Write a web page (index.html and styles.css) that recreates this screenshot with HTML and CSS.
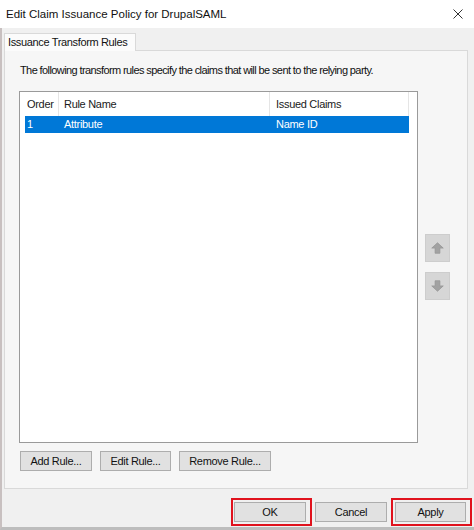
FILE: index.html
```html
<!DOCTYPE html>
<html lang="en">
<head>
<meta charset="utf-8">
<title>Edit Claim Issuance Policy for DrupalSAML</title>
<link rel="stylesheet" href="styles.css">
</head>
<body>
<div class="window">
  <div class="titlebar">
    <span class="title">Edit Claim Issuance Policy for DrupalSAML</span>
    <svg class="close" viewBox="0 0 10 10" aria-hidden="true"><path d="M0.5 0.5 L9.5 9.5 M9.5 0.5 L0.5 9.5" stroke="#333" stroke-width="1" fill="none"/></svg>
  </div>
  <div class="content">
    <div class="tab">Issuance Transform Rules</div>
    <div class="panel">
      <p class="desc">The following transform rules specify the claims that will be sent to the relying party.</p>
      <div class="list-row">
        <div class="listbox">
          <div class="lv-grid lv-header">
            <div class="cell c-order">Order</div>
            <div class="cell c-name">Rule Name</div>
            <div class="cell c-claims">Issued Claims</div>
          </div>
          <div class="lv-grid lv-row selected">
            <div class="cell c-order">1</div>
            <div class="cell c-name">Attribute</div>
            <div class="cell c-claims">Name ID</div>
          </div>
        </div>
        <div class="move-buttons">
          <button class="arrow-btn" aria-label="Move up">
            <svg viewBox="0 0 14 13"><path d="M7 0.8 L13.2 6.6 H9.6 V12.2 H4.4 V6.6 H0.8 Z" fill="#a2a2a2" stroke="#959595" stroke-width="0.8"/></svg>
          </button>
          <button class="arrow-btn" aria-label="Move down">
            <svg viewBox="0 0 14 13"><path d="M7 12.2 L13.2 6.4 H9.6 V0.8 H4.4 V6.4 H0.8 Z" fill="#a2a2a2" stroke="#959595" stroke-width="0.8"/></svg>
          </button>
        </div>
      </div>
      <div class="rule-buttons">
        <button class="btn btn-add">Add Rule...</button>
        <button class="btn btn-edit">Edit Rule...</button>
        <button class="btn btn-remove">Remove Rule...</button>
      </div>
    </div>
    <div class="dialog-buttons">
      <span class="hl hl-ok"><button class="btn btn-ok">OK</button></span>
      <button class="btn btn-cancel">Cancel</button>
      <span class="hl hl-apply"><button class="btn btn-apply">Apply</button></span>
    </div>
  </div>
</div>
</body>
</html>
```
FILE: styles.css
```css
html, body {
  margin: 0;
  padding: 0;
  background: #f0f0f0;
  font-family: "Liberation Sans", Arial, sans-serif;
  color: #000;
}

.window {
  width: 474px;
  height: 530px;
  display: flex;
  flex-direction: column;
  background: #f0f0f0;
  overflow: hidden;
}

.titlebar {
  flex: none;
  height: 28px;
  background: #ffffff;
  display: flex;
  align-items: center;
  justify-content: space-between;
  padding: 0 11px 0 6px;
}

.title {
  font-size: 11.5px;
  color: #111;
}

.close {
  width: 10px;
  height: 10px;
}

.content {
  flex: 1;
  display: flex;
  flex-direction: column;
  align-items: flex-start;
  border-left: 2px solid #c8c0c0;
  border-bottom: 3px solid #bdbdbd;
  padding: 5px 0 0 2px;
}

.tab {
  position: relative;
  z-index: 1;
  width: 132px;
  height: 18px;
  box-sizing: border-box;
  border: 1px solid #d9d9d9;
  border-bottom: none;
  background: #fbfbfb;
  font-size: 11px;
  line-height: 13px;
  letter-spacing: -0.35px;
  padding: 2px 0 0 3px;
  margin-bottom: -1px;
  color: #111;
}

.panel {
  width: 464px;
  height: 439px;
  box-sizing: border-box;
  border: 1px solid #d9d9d9;
  background: #f6f6f6;
  padding: 12px 0 0 14px;
}

.desc {
  margin: 0 0 14px 1px;
  font-size: 11px;
  line-height: 14px;
  letter-spacing: -0.6px;
  color: #111;
}

.list-row {
  display: flex;
  align-items: center;
  gap: 7px;
}

.listbox {
  width: 399px;
  height: 352px;
  box-sizing: border-box;
  border: 1px solid #9a9a9a;
  background: #ffffff;
  padding-left: 5px;
}

.lv-grid {
  display: grid;
  grid-template-columns: 34px 211px 139px;
  width: 384px;
  font-size: 11px;
  letter-spacing: -0.3px;
}

.lv-header {
  height: 24px;
  align-items: center;
  color: #1a1a1a;
}

.lv-header .cell {
  height: 24px;
  line-height: 24px;
  box-sizing: border-box;
  border-right: 1px solid #e5e5e5;
}

.lv-row {
  height: 17px;
  line-height: 17px;
}

.lv-row.selected {
  background: #0078d7;
  color: #ffffff;
}

.c-order { padding-left: 2px; }
.c-name { padding-left: 5px; }
.c-claims { padding-left: 6px; }

.move-buttons {
  display: flex;
  flex-direction: column;
  gap: 10px;
}

.arrow-btn {
  width: 25px;
  height: 28px;
  box-sizing: border-box;
  padding: 0;
  background: #d6d6d6;
  border: 1px solid #cdcdcd;
  display: flex;
  align-items: center;
  justify-content: center;
}

.arrow-btn svg {
  width: 13px;
  height: 12px;
}

.rule-buttons {
  display: flex;
  gap: 8px;
  margin: 8px 0 0 1px;
}

.btn {
  height: 20px;
  box-sizing: border-box;
  padding: 0;
  background: #e1e1e1;
  border: 1px solid #adadad;
  font-family: "Liberation Sans", Arial, sans-serif;
  font-size: 11px;
  letter-spacing: -0.3px;
  color: #111;
}

.btn-add { width: 72px; }
.btn-edit { width: 71px; }
.btn-remove { width: 92px; }

.dialog-buttons {
  align-self: stretch;
  display: flex;
  justify-content: flex-end;
  margin-top: 13px;
  padding-right: 8px;
}

.btn-ok { width: 72px; display: block; }
.btn-cancel { width: 72px; margin-left: 9px; }
.btn-apply { width: 71px; display: block; }

.hl {
  position: relative;
  display: block;
}

.hl-apply { margin-left: 8px; }

.hl::after {
  content: "";
  position: absolute;
  top: -4px;
  bottom: -4px;
  border: 2px solid #e0121d;
  pointer-events: none;
}

.hl-ok::after { left: -3px; right: -6px; }
.hl-apply::after { left: -4px; right: -6px; }
```
